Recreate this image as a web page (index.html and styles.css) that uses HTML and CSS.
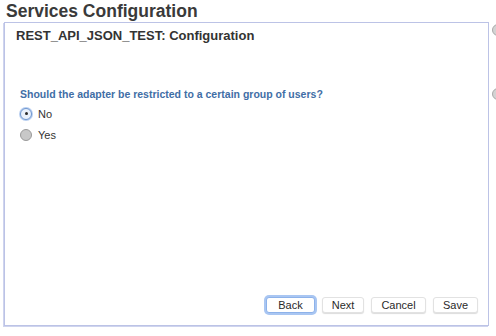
FILE: index.html
```html
<!DOCTYPE html>
<html lang="en">
<head>
    <meta charset="UTF-8">
    <meta name="viewport" content="width=device-width, initial-scale=1.0">
    <title>Services Configuration</title>
    <link rel="stylesheet" href="styles.css">
</head>
<body>
<div class="page">
    <h1 class="page-title">Services Configuration</h1>
    <div class="layout">
        <div class="panel">
            <h2 class="panel-title">REST_API_JSON_TEST: Configuration</h2>
            <div class="question">
                <p class="question-text">Should the adapter be restricted to a certain group of users?</p>
                <label class="radio-row">
                    <span class="radio checked"></span>
                    <span>No</span>
                </label>
                <label class="radio-row">
                    <span class="radio"></span>
                    <span>Yes</span>
                </label>
            </div>
            <div class="actions">
                <button class="btn focused">Back</button>
                <button class="btn">Next</button>
                <button class="btn">Cancel</button>
                <button class="btn">Save</button>
            </div>
        </div>
        <div class="side">
            <span class="side-dot"></span>
            <span class="side-dot second"></span>
        </div>
    </div>
</div>
</body>
</html>
```

FILE: styles.css
```css
/* Services configuration */
html, body {
    margin: 0;
    padding: 0;
    background: #FFFFFF;
    overflow: hidden;
}

body {
    width: 496px;
    height: 336px;
    font-family: 'Liberation Sans', Arial, sans-serif;
    color: #333333;
}

.page {
    padding: 0 0 0 4px;
}

.page-title {
    margin: 0;
    padding: 1px 0 0 2px;
    height: 21px;
    font-size: 17.5px;
    font-weight: bold;
    color: #3a3a3a;
    line-height: 20px;
}

.layout {
    display: flex;
}

.panel {
    box-sizing: border-box;
    width: 485px;
    height: 304px;
    border: 1px solid #bcc3e6;
    box-shadow: -1px 1px 0 #cfd4ee;
    display: flex;
    flex-direction: column;
    padding: 5px 10px 12px 11px;
}

.panel-title {
    margin: 0;
    font-size: 13px;
    font-weight: bold;
    color: #333333;
    line-height: 16px;
}

.question {
    margin-top: 44px;
    padding-left: 4px;
    flex: 1;
}

.question-text {
    margin: 0 0 2px 0;
    font-size: 10.5px;
    font-weight: bold;
    color: #3f6ea6;
    line-height: 13px;
}

.radio-row {
    display: flex;
    align-items: center;
    gap: 6px;
    height: 21px;
    font-size: 11px;
    color: #333333;
}

.radio {
    box-sizing: border-box;
    width: 12px;
    height: 12px;
    border-radius: 50%;
    border: 1px solid #9a9a9a;
    background: #c8c8c8;
}

.radio.checked {
    border: 1px solid #6f97d0;
    background: #e9f0fb;
    box-shadow: 0 0 0 1px #b9cff0;
    position: relative;
}

.radio.checked::after {
    content: "";
    position: absolute;
    left: 3.5px;
    top: 3.5px;
    width: 3px;
    height: 3px;
    border-radius: 50%;
    background: #2a2a2a;
}

.actions {
    display: flex;
    justify-content: flex-end;
    gap: 7px;
    padding-right: 0;
}

.btn {
    box-sizing: border-box;
    height: 16px;
    padding: 0;
    font-family: 'Liberation Sans', Arial, sans-serif;
    font-size: 11px;
    line-height: 14px;
    color: #2a2a2a;
    background: #FFFFFF;
    border: 1px solid #e2e2e2;
    border-radius: 3px;
    box-shadow: 0 1px 1px #dcdcdc;
}

.btn:nth-child(1) { width: 49px; }
.btn:nth-child(2) { width: 42px; }
.btn:nth-child(3) { width: 55px; }
.btn:nth-child(4) { width: 45px; }

.btn.focused {
    border: 1px solid #8db2ea;
    box-shadow: 0 0 0 2px #a9c6f2;
}

.side {
    position: relative;
    width: 7px;
}

.side-dot {
    position: absolute;
    left: 3px;
    top: 2px;
    width: 10px;
    height: 10px;
    border-radius: 50%;
    border: 1px solid #aaaaaa;
    background: #d3d3d3;
}

.side-dot.second {
    top: 66px;
}
```
